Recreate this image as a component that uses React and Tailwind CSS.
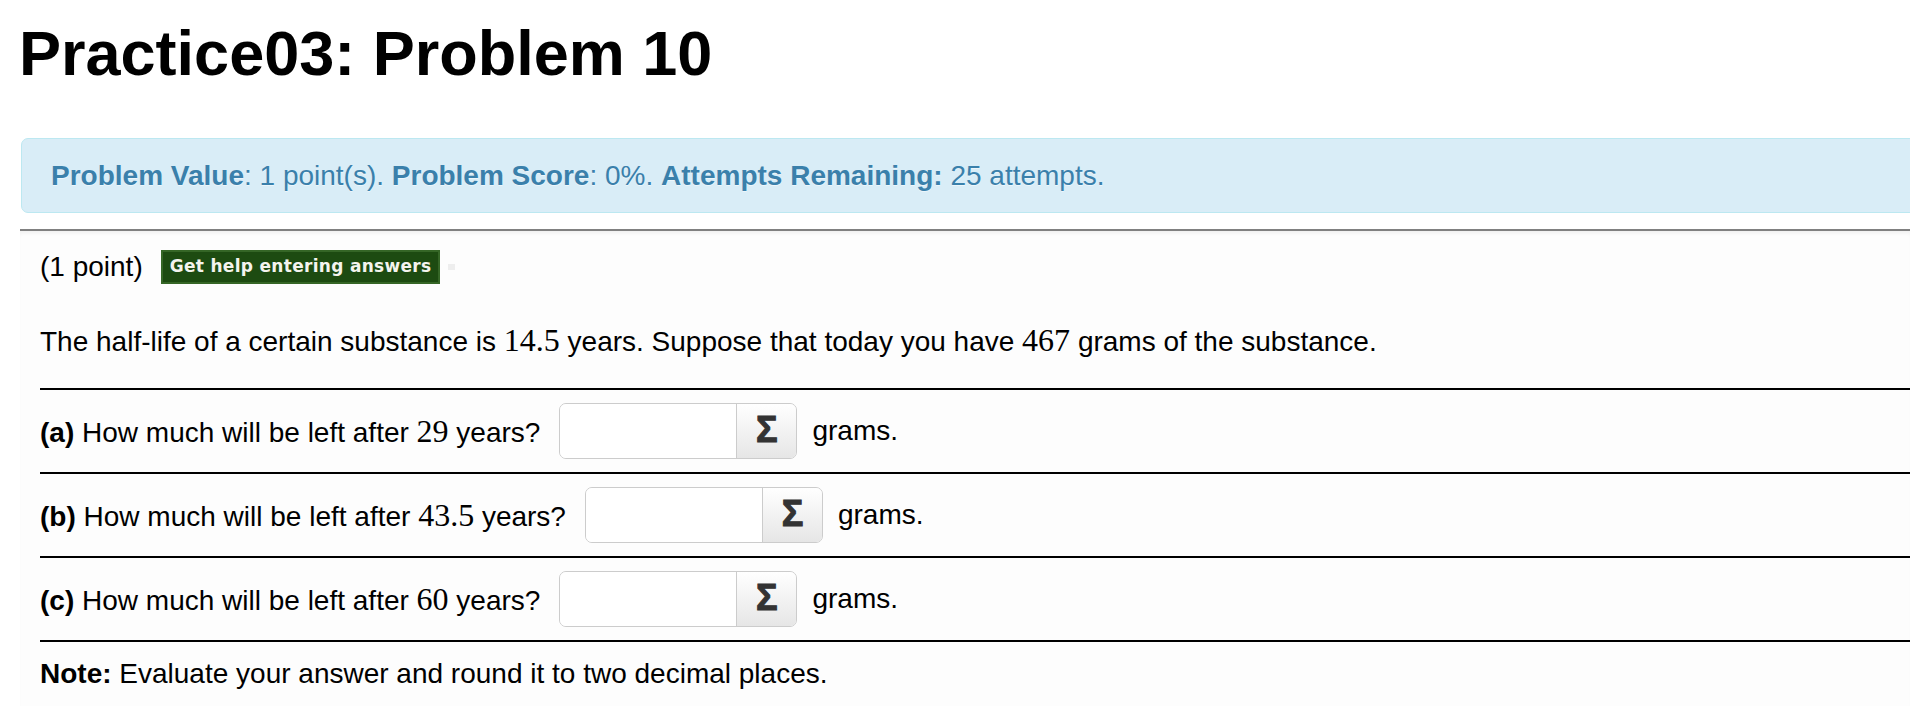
import React from "react";

const serif = "font-['Liberation_Serif','Times_New_Roman',serif] text-[32px]";

function Num({ children }) {
  return <span className={serif}>{children}</span>;
}

function AnswerBox() {
  return (
    <div className="flex h-[56px] ml-[19px] mr-[15px] rounded-[7px] border border-[#cccccc] overflow-hidden shadow-[inset_0_1px_2px_rgba(0,0,0,0.06)]">
      <div className="w-[176px] bg-white" />
      <div className="w-[60px] flex items-center justify-center border-l border-[#cccccc] bg-gradient-to-b from-[#ffffff] to-[#e6e6e6]">
        <span className="font-['Liberation_Sans',Arial,sans-serif] font-bold text-[36px] leading-none text-[#333333] -mt-[2px] [-webkit-text-stroke:1px_#333333]">Σ</span>
      </div>
    </div>
  );
}

function Row({ label, children }) {
  return (
    <div className="h-[82px] flex items-center">
      <span>
        <b>{label}</b> {children}
      </span>
      <AnswerBox />
      <span>grams.</span>
    </div>
  );
}

function Hr() {
  return <div className="h-[2px] bg-black" />;
}

export default function App() {
  return (
    <div className="w-full h-[724px] overflow-hidden bg-white text-black font-['Liberation_Sans',Arial,Helvetica,sans-serif]">
      <h1 className="mt-[19px] ml-[19px] text-[63px] leading-[69px] font-bold whitespace-nowrap">
        Practice03: Problem 10
      </h1>
      <div className="mt-[50px] ml-[21px] -mr-[20px] h-[75px] flex items-center pl-[29px] rounded-[7px] border border-[#bce8f1] bg-[#d9edf7] text-[#3a80ab] text-[28px] whitespace-nowrap [text-shadow:0_1px_0_rgba(255,255,255,0.5)]">
        <span>
          <b>Problem Value</b>: 1 point(s). <b>Problem Score</b>: 0%. <b>Attempts Remaining:</b> 25 attempts.
        </span>
      </div>
      <div className="mt-[16px] ml-[20px] h-[2px] bg-[#808080]" />
      <div className="ml-[20px] pl-[20px] bg-[#fdfdfd] text-[28px] whitespace-nowrap shadow-[inset_0_4px_4px_-2px_rgba(0,0,0,0.06)]">
        <div className="h-[72px] flex items-center">
          <span>(1 point)</span>
          <div className="ml-[18px] h-[34px] px-[7px] flex items-center bg-[#1d4b11] border-2 border-[#356626]">
            <span className="font-['DejaVu_Sans',Verdana,sans-serif] font-bold text-[17px] text-[#f4f4ee] tracking-[0.3px]">
              Get help entering answers
            </span>
          </div>
          <div className="ml-[8px] w-[7px] h-[6px] bg-[#eeeeee]" />
        </div>
        <div className="h-[74px] flex items-center">
          <span>
            The half-life of a certain substance is <Num>14.5</Num> years. Suppose that today you have <Num>467</Num> grams of the substance.
          </span>
        </div>
        <div className="h-[11px]" />
        <Hr />
        <Row label="(a)">
          How much will be left after <Num>29</Num> years?
        </Row>
        <Hr />
        <Row label="(b)">
          How much will be left after <Num>43.5</Num> years?
        </Row>
        <Hr />
        <Row label="(c)">
          How much will be left after <Num>60</Num> years?
        </Row>
        <Hr />
        <div className="h-[64px] flex items-center">
          <span>
            <b>Note:</b> Evaluate your answer and round it to two decimal places.
          </span>
        </div>
      </div>
    </div>
  );
}
